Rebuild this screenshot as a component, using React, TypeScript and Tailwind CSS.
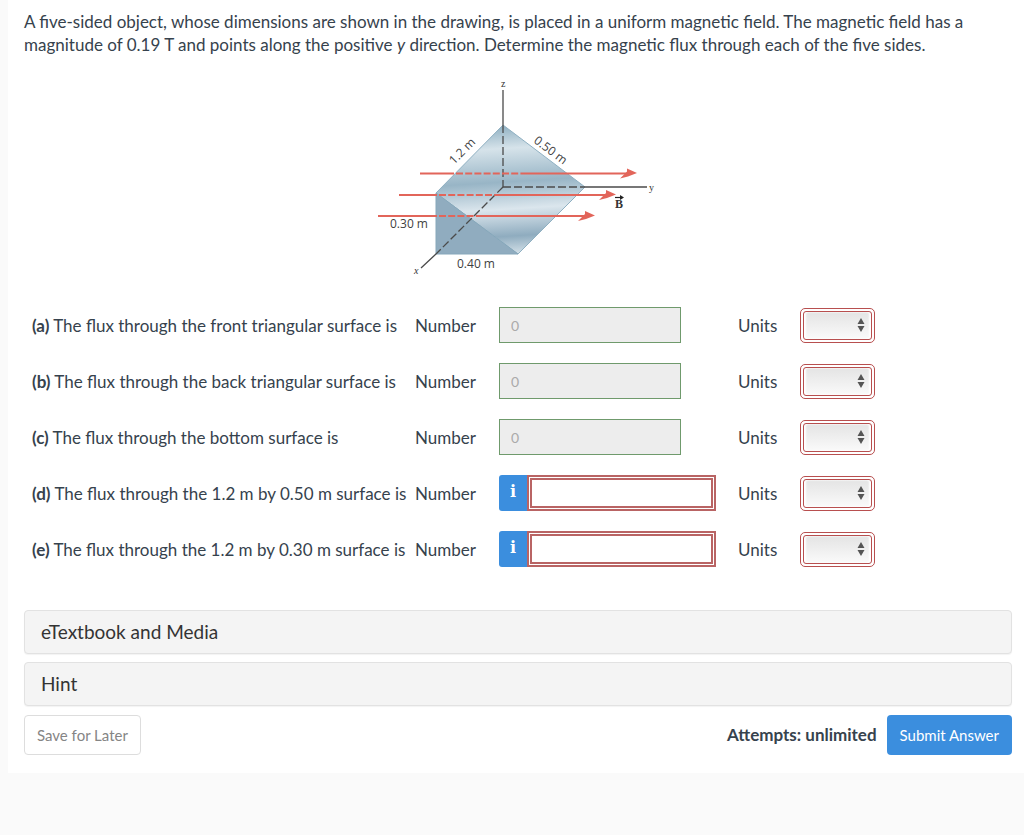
import { useState } from 'react';

const FONT = "font-['Lato','Open_Sans',sans-serif]";

type Part = {
  id: string;
  text: string;
  locked: boolean;
};

const parts: Part[] = [
  { id: 'a', text: 'The flux through the front triangular surface is', locked: true },
  { id: 'b', text: 'The flux through the back triangular surface is', locked: true },
  { id: 'c', text: 'The flux through the bottom surface is', locked: true },
  { id: 'd', text: 'The flux through the 1.2 m by 0.50 m surface is', locked: false },
  { id: 'e', text: 'The flux through the 1.2 m by 0.30 m surface is', locked: false },
];

function FieldLine({ y, start, dashFrom, dashTo, tip }: { y: number; start: number; dashFrom: number; dashTo: number; tip: number }) {
  return (
    <g stroke="#e2655a" strokeWidth="2.2" fill="none">
      <path d={`M${start} ${y}H${dashFrom}`} />
      <path d={`M${dashFrom} ${y}H${dashTo}`} strokeDasharray="7 2.2" strokeDashoffset="-2" />
      <path d={`M${dashTo} ${y}H${tip - 8}`} />
      <path
        d={`M${tip + 1} ${y - 0.5}L${tip - 9} ${y - 5}L${tip - 9} ${y - 2}L${tip - 16} ${y + 5}L${tip - 8} ${y + 3}Z`}
        fill="#e2655a"
        stroke="none"
      />
    </g>
  );
}

function PrismFigure() {
  return (
    <svg viewBox="370 75 290 205" className="h-[205px] w-[290px]" role="img" aria-label="Five-sided object in a magnetic field">
      <defs>
        <linearGradient id="slant" gradientUnits="userSpaceOnUse" x1="506" y1="125" x2="514" y2="254">
          <stop offset="0" stopColor="#8fb0c2" />
          <stop offset="0.18" stopColor="#d6e3ea" />
          <stop offset="0.44" stopColor="#98b5c6" />
          <stop offset="0.65" stopColor="#dbe6ed" />
          <stop offset="0.86" stopColor="#8facbf" />
          <stop offset="1" stopColor="#d3e0e8" />
        </linearGradient>
      </defs>
      <path d="M503 125L585 187L518 254L436 193Z" fill="url(#slant)" stroke="#8fb0c2" strokeWidth="1" />
      <path d="M436 193L518 254H436Z" fill="#90acbf" stroke="#86a7ba" strokeWidth="1" />

      <g stroke="#4b4b4b" strokeWidth="1.3" fill="none">
        <path d="M503 90V125M585 187H647M436 254L421 268" />
        <path d="M503 125V187" strokeDasharray="8 3" />
        <path d="M503 187H585" strokeDasharray="8 3" />
        <path d="M503 187L436 254" strokeDasharray="8 3" />
      </g>

      <FieldLine y={173.5} start={420} dashFrom={454} dashTo={523} tip={636} />
      <FieldLine y={195} start={399} dashFrom={437} dashTo={501} tip={615} />
      <FieldLine y={216} start={378} dashFrom={437} dashTo={479} tip={594} />

      <g className="font-['Open_Sans',sans-serif]" fontSize="12" fill="#3f3f3f">
        <text x="390" y="228">0.30 m</text>
        <text x="457" y="268">0.40 m</text>
        <text transform="translate(454 165) rotate(-45)">1.2 m</text>
        <text transform="translate(533 142) rotate(37)">0.50 m</text>
      </g>
      <g className="font-['Liberation_Serif',serif]" fontSize="10" fill="#333">
        <text x="501" y="87">z</text>
        <text x="649" y="191">y</text>
        <text x="414" y="274" fontStyle="italic">x</text>
        <text x="615" y="208" fontSize="12" fontWeight="bold">B</text>
      </g>
      <path d="M615 197.500H621" stroke="#222" strokeWidth="1.2" />
      <path d="M620 195L624 197.500L620 200Z" fill="#222" />
    </svg>
  );
}

function UnitsSelect({ id }: { id: string }) {
  return (
    <div className="relative h-[35px] w-[75px] rounded-[5px] border border-[#b84f4f] bg-white p-[2px]">
      <select
        id={`units-${id}`}
        className="block h-full w-full appearance-none rounded-[3px] border border-[#b84f4f] bg-linear-to-b from-[#e4e4e4] to-[#fafafa] px-2 text-sm text-[#3a4650] shadow-[inset_2px_0_2px_#ffffff,inset_-2px_0_2px_#ffffff]"
      >
        <option value=""></option>
        <option value="wb">Wb</option>
        <option value="t">T</option>
      </select>
      <svg viewBox="0 0 8 14" className="pointer-events-none absolute top-[9px] right-[9px] h-[14px] w-[8px]" fill="#555" aria-hidden="true">
        <path d="M4 0L7.500 6H0.500ZM4 14L0.500 8H7.500Z" />
      </svg>
    </div>
  );
}

function AnswerRow({ part, value, onChange }: { part: Part; value: string; onChange: (value: string) => void }) {
  return (
    <div className="grid h-14 grid-cols-[383px_84px_239px_62px_1fr] items-center">
      <div className="pt-0.5">
        <b>({part.id})</b> {part.text}
      </div>
      <label htmlFor={`number-${part.id}`} className="pt-0.5">
        Number
      </label>
      {part.locked ? (
        <input
          id={`number-${part.id}`}
          disabled
          value="0"
          className="h-9 w-[182px] border border-[#6f9a6c] bg-[#ededed] px-[11px] text-sm text-[#aaaaaa]"
        />
      ) : (
        <div className="flex h-9">
          <button
            type="button"
            aria-label="Information"
            className="w-7 rounded-l-[3px] bg-[#3b8ede] pb-0.5 font-['DejaVu_Serif',serif] text-base font-bold text-white"
          >
            i
          </button>
          <input
            id={`number-${part.id}`}
            value={value}
            onChange={(e) => onChange(e.target.value)}
            className="w-[189px] border-5 border-double border-[#b96464] bg-white px-2 text-sm outline-none"
          />
        </div>
      )}
      <label htmlFor={`units-${part.id}`} className="pt-0.5">
        Units
      </label>
      <UnitsSelect id={part.id} />
    </div>
  );
}

export default function App() {
  const [answers, setAnswers] = useState<Record<string, string>>({});

  return (
    <div className={`min-h-screen bg-[#fafafa] pl-2 text-[17px] text-[#36424d] ${FONT}`}>
      <main className="bg-white pt-2.5 pr-3 pb-[18px] pl-4">
        <p className="leading-[23px]">
          A five-sided object, whose dimensions are shown in the drawing, is placed in a uniform magnetic field. The magnetic field has a
          magnitude of 0.19 T and points along the positive <i>y</i> direction. Determine the magnetic flux through each of the five sides.
        </p>

        <div className="mt-[19px] flex justify-center pr-1.5">
          <PrismFigure />
        </div>

        <div className="mt-[17px] pl-2">
          {parts.map((part) => (
            <AnswerRow
              key={part.id}
              part={part}
              value={answers[part.id] ?? ''}
              onChange={(value) => setAnswers({ ...answers, [part.id]: value })}
            />
          ))}
        </div>

        <div className="mt-[33px] flex flex-col gap-2">
          {['eTextbook and Media', 'Hint'].map((title) => (
            <button
              key={title}
              type="button"
              className="h-11 rounded border border-[#e2e2e2] bg-[#f4f4f4] px-4 text-left text-[19px] text-[#333333] shadow-[0_1px_1px_#0000000d]"
            >
              {title}
            </button>
          ))}
        </div>

        <div className="mt-[9px] flex items-center justify-between">
          <button type="button" className="h-10 rounded border border-[#dddddd] bg-white px-3 text-[15px] text-[#858585]">
            Save for Later
          </button>
          <div className="flex items-center gap-2.5">
            <span className="font-bold">Attempts: unlimited</span>
            <button type="button" className="h-10 rounded bg-[#3b8ede] px-[13px] text-[15px] text-white">
              Submit Answer
            </button>
          </div>
        </div>
      </main>
    </div>
  );
}
